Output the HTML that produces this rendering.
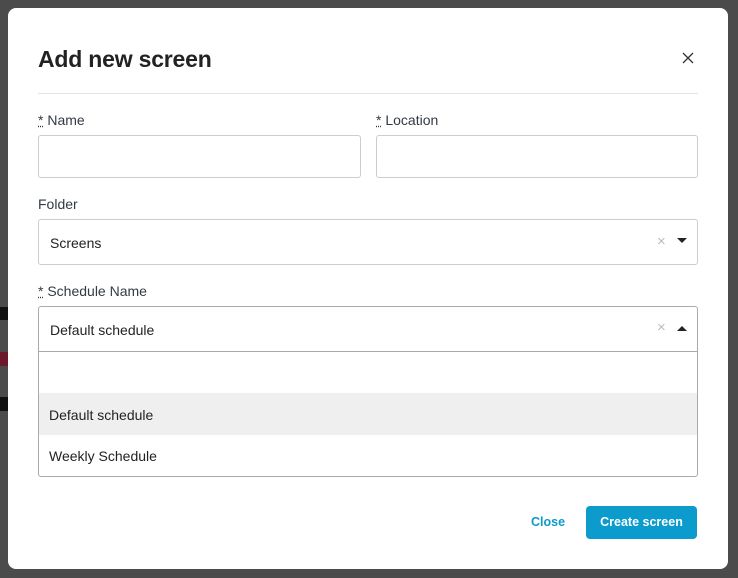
<html><head><style>
body{margin:0;width:738px;height:578px;background:#4b4b4b;font-family:"Liberation Sans",sans-serif;position:relative;overflow:hidden}
.m{position:absolute;left:8px;top:8px;width:720px;height:561px;background:#fff;border-radius:8px}
.a{position:absolute}
h1{position:absolute;left:30px;top:38px;margin:0;font-size:23px;font-weight:bold;color:#222;letter-spacing:-0.2px}
.l{position:absolute;font-size:14px;color:#333a45}
.l u{text-decoration:underline dotted}
.i{position:absolute;border:1px solid #ccc;border-radius:3px;box-sizing:border-box;background:#fff}
.t{position:absolute;font-size:14px;color:#222}
</style></head><body>
<div class="a" style="left:0;top:307px;width:8px;height:13px;background:#111"></div>
<div class="a" style="left:0;top:352px;width:8px;height:14px;background:#6a1a2a"></div>
<div class="a" style="left:0;top:397px;width:8px;height:14px;background:#111"></div>
<div class="m">
<h1>Add new screen</h1>
<svg class="a" style="left:674px;top:44px" width="12" height="12"><path d="M1 1L11 11M11 1L1 11" stroke="#333" stroke-width="1.3"/></svg>
<div class="a" style="left:30px;top:85px;width:660px;height:1px;background:#e3e3e3"></div>
<div class="l" style="left:30px;top:104px"><u>*</u> Name</div>
<div class="l" style="left:368px;top:104px"><u>*</u> Location</div>
<div class="i" style="left:30px;top:127px;width:323px;height:43px"></div>
<div class="i" style="left:368px;top:127px;width:322px;height:43px"></div>
<div class="l" style="left:30px;top:188px">Folder</div>
<div class="i" style="left:30px;top:211px;width:660px;height:46px"></div>
<div class="t" style="left:42px;top:227px">Screens</div>
<div class="a" style="left:649px;top:225px;font-size:15px;color:#bbb">×</div>
<svg class="a" style="left:669px;top:230px" width="10" height="6"><path d="M0 0H10L5 5Z" fill="#222"/></svg>
<div class="l" style="left:30px;top:275px"><u>*</u> Schedule Name</div>
<div class="i" style="left:30px;top:298px;width:660px;height:171px;border-color:#aaa"></div>
<div class="a" style="left:31px;top:343px;width:658px;height:1px;background:#aaa"></div>
<div class="t" style="left:42px;top:314px">Default schedule</div>
<div class="a" style="left:649px;top:311px;font-size:15px;color:#bbb">×</div>
<svg class="a" style="left:669px;top:318px" width="10" height="6"><path d="M0 5H10L5 0Z" fill="#222"/></svg>
<div class="a" style="left:31px;top:385px;width:658px;height:42px;background:#efefef"></div>
<div class="t" style="left:41px;top:399px">Default schedule</div>
<div class="t" style="left:41px;top:440px">Weekly Schedule</div>
<div class="a" style="left:523px;top:507px;font-size:12.5px;font-weight:bold;color:#0b9bcc">Close</div>
<div class="a" style="left:578px;top:498px;width:111px;height:33px;background:#0b9bcc;border-radius:4px;color:#fff;font-size:12.5px;font-weight:bold;text-align:center;line-height:33px">Create screen</div>
</div>
</body></html>
